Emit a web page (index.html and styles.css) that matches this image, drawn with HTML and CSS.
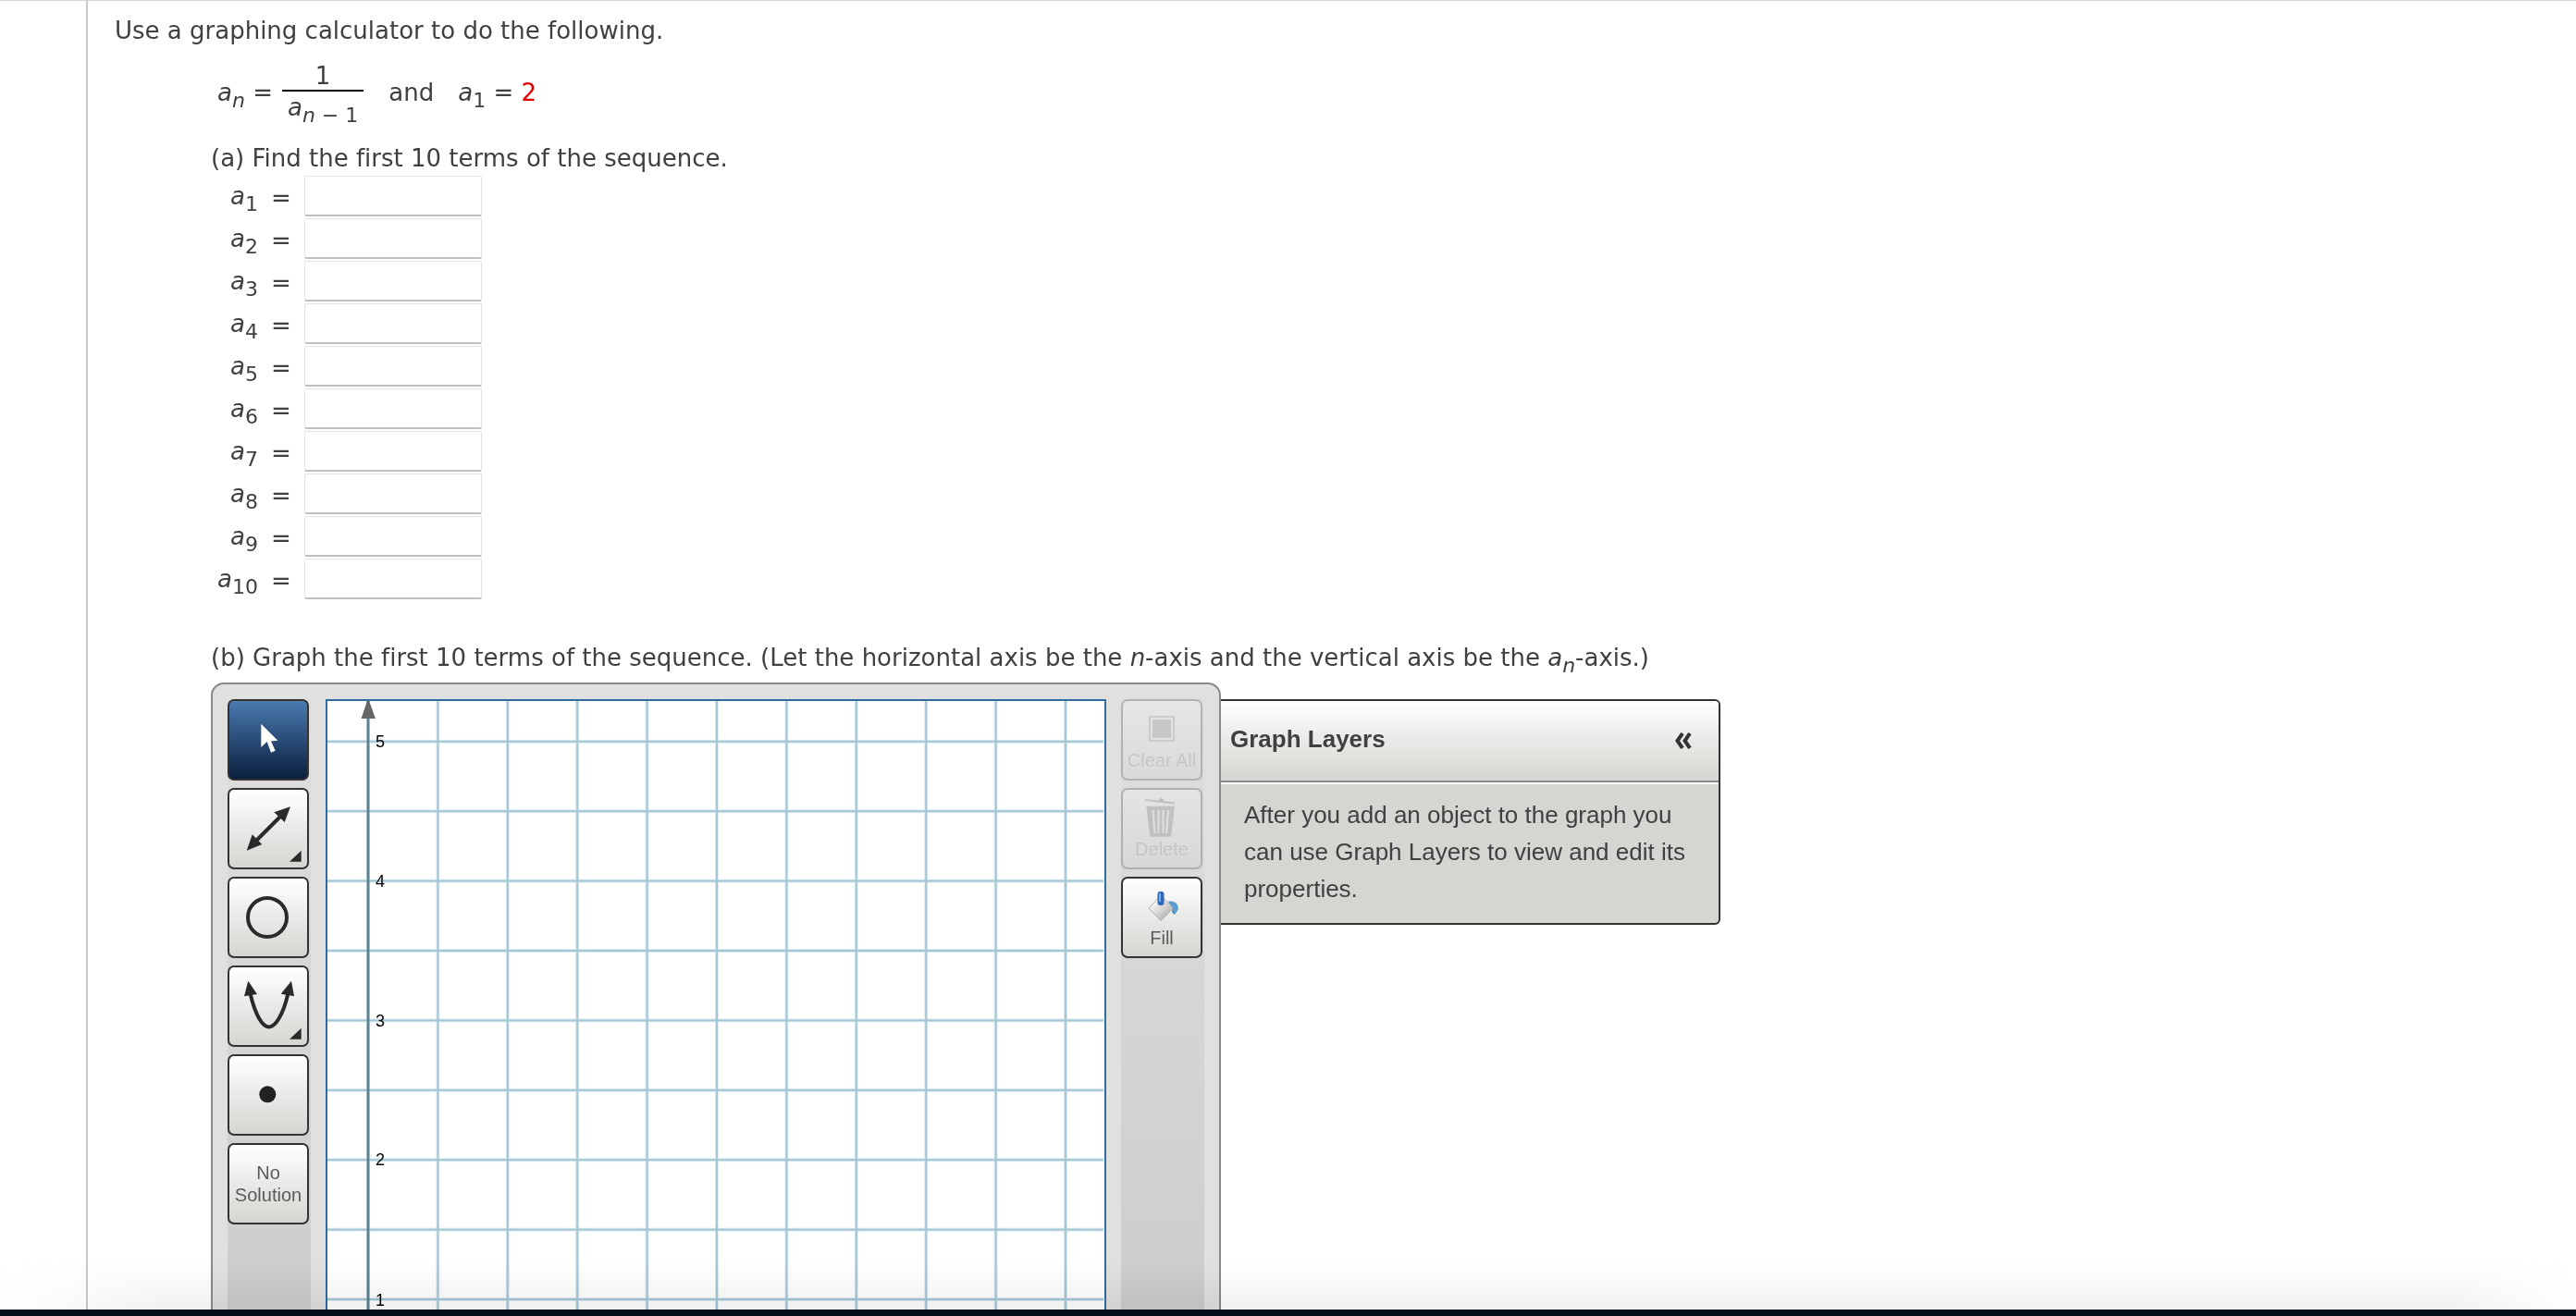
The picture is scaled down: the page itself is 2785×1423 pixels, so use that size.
FILE: index.html
```html
<!DOCTYPE html>
<html lang="en">
<head>
<meta charset="utf-8">
<title>Sequence graphing question</title>
<link rel="stylesheet" href="styles.css">
</head>
<body>
<main class="page">
  <section class="question">
    <p class="line">Use a graphing calculator to do the following.</p>
    <div class="work">
      <div class="formula">
        <span><i>a</i><sub><i>n</i></sub> =</span>
        <span class="fraction">
          <span class="numerator">1</span>
          <span class="denominator"><i>a</i><sub><i>n</i> − 1</sub></span>
        </span>
        <span class="and">and</span>
        <span><i>a</i><sub>1</sub> = <span class="given">2</span></span>
      </div>
      <p class="line">(a) Find the first 10 terms of the sequence.</p>
      <div class="terms">
        <div class="term"><label for="t1"><i>a</i><sub>1</sub></label><span>=</span><input id="t1" type="text"></div>
        <div class="term"><label for="t2"><i>a</i><sub>2</sub></label><span>=</span><input id="t2" type="text"></div>
        <div class="term"><label for="t3"><i>a</i><sub>3</sub></label><span>=</span><input id="t3" type="text"></div>
        <div class="term"><label for="t4"><i>a</i><sub>4</sub></label><span>=</span><input id="t4" type="text"></div>
        <div class="term"><label for="t5"><i>a</i><sub>5</sub></label><span>=</span><input id="t5" type="text"></div>
        <div class="term"><label for="t6"><i>a</i><sub>6</sub></label><span>=</span><input id="t6" type="text"></div>
        <div class="term"><label for="t7"><i>a</i><sub>7</sub></label><span>=</span><input id="t7" type="text"></div>
        <div class="term"><label for="t8"><i>a</i><sub>8</sub></label><span>=</span><input id="t8" type="text"></div>
        <div class="term"><label for="t9"><i>a</i><sub>9</sub></label><span>=</span><input id="t9" type="text"></div>
        <div class="term"><label for="t10"><i>a</i><sub>10</sub></label><span>=</span><input id="t10" type="text"></div>
      </div>
      <p class="line">(b) Graph the first 10 terms of the sequence. (Let the horizontal axis be the <i>n</i>-axis and the vertical axis be the <i>a</i><sub><i>n</i></sub>-axis.)</p>
      <div class="grapher">
        <div class="tool">
          <div class="column">
            <button class="key selected" type="button" aria-label="Pointer">
              <svg viewBox="0 0 84 84"><path fill="#fff" d="M34.3 24.7V50l6.4-6L45 55.7l4.7-2L45 43.6l7.3-.8z"/></svg>
            </button>
            <button class="key" type="button" aria-label="Line">
              <svg viewBox="0 0 84 84" fill="#2a2a2a"><path d="M24 60 60 24" stroke="#2a2a2a" stroke-width="4"/><path d="M66 18.3 48.3 24.3 59.7 35zM18.7 65.7l6-17.4 10.6 10.7zM65 77.7h12.7v-12z"/></svg>
            </button>
            <button class="key" type="button" aria-label="Circle">
              <svg viewBox="0 0 84 84"><circle cx="41" cy="42" r="21" fill="none" stroke="#2a2a2a" stroke-width="4"/></svg>
            </button>
            <button class="key" type="button" aria-label="Parabola">
              <svg viewBox="0 0 84 84" fill="#2a2a2a"><path d="M22.5 28C28 52 36 64.5 42.7 64.5S58 52 63.5 28" fill="none" stroke="#2a2a2a" stroke-width="4"/><path d="M20.3 14.7 16 31.3 30 29zM67 14.7 55.7 28.7 70 31.3zM65 77.7h12.7v-12z"/></svg>
            </button>
            <button class="key" type="button" aria-label="Point">
              <svg viewBox="0 0 84 84"><circle cx="41.3" cy="41.3" r="9" fill="#222"/></svg>
            </button>
            <button class="key worded" type="button">No<br>Solution</button>
          </div>
          <div class="plot">
            <svg viewBox="0 0 840 840" role="img" aria-label="Coordinate grid">
              <defs>
                <pattern id="grid" x="6.3" y="6.1" width="75.4" height="75.4" patternUnits="userSpaceOnUse">
                  <path d="M0 37.7H75.4M37.7 0V75.4" stroke="#5b99b3" stroke-opacity=".2" stroke-width="4"/>
                  <path d="M0 37.7H75.4M37.7 0V75.4" stroke="#5b99b3" stroke-opacity=".45" stroke-width="2"/>
                </pattern>
              </defs>
              <rect width="839" height="840" fill="url(#grid)"/>
              <path d="M44 0V840" stroke="#3c6675" stroke-opacity=".7" stroke-width="3"/>
              <path d="M44 -3 36.5 19h15.5z" fill="#666"/>
              <g class="ticks"><text x="52" y="50">5</text><text x="52" y="201">4</text><text x="52" y="352">3</text><text x="52" y="502">2</text><text x="52" y="654">1</text></g>
            </svg>
          </div>
          <div class="column">
            <button class="key worded low" type="button" disabled>
              <svg viewBox="0 0 84 52" fill="#8a8a8a"><path d="M29 17h26v26H29z" fill="none" stroke="#999" stroke-width="2"/><path d="M32 20h20v20H32z"/></svg>
              <span>Clear All</span>
            </button>
            <button class="key worded low" type="button" disabled>
              <svg viewBox="0 0 84 52" fill="#777"><path d="M24.3 10 38 11.5 41 9l3 1v2l12 1.5v2L24.3 12zM25.3 17.7H56l-4 33H29.3z"/><path d="M32.5 22l2 25M38.5 22v25M43.5 22v25M49 22l-2 25" stroke="#eee" stroke-width="2"/></svg>
              <span>Delete</span>
            </button>
            <button class="key worded low" type="button">
              <svg viewBox="0 0 84 52">
                <defs><linearGradient id="steel" x1="0" y1="0" x2="1" y2="1"><stop offset=".2" stop-color="#fafafa"/><stop offset="1" stop-color="#a0a0a0"/></linearGradient></defs>
                <path d="M49 25c7-2 12 3 10.500 9l-3.500 5-3-2v-6z" fill="#5a9bd0"/>
                <path d="M41 18.5 54.5 32 41 45.5 28 32z" fill="url(#steel)" stroke="#aaa"/>
                <rect x="37.5" y="14" width="7" height="15" rx="3" fill="#2d68b8"/><path d="M40 16v9" stroke="#78aee6" stroke-width="2"/>
              </svg>
              <span>Fill</span>
            </button>
          </div>
        </div>
        <aside class="layers">
          <header class="layers-head">
            <h2>Graph Layers</h2>
            <button class="collapse" type="button" aria-label="Collapse"><svg viewBox="0 0 20 18"><path d="M9 1 3.5 9 9 17M17 1l-5.5 8 5.5 8" fill="none" stroke="#333" stroke-width="4"/></svg></button>
          </header>
          <p>After you add an object to the graph you can use Graph Layers to view and edit its properties.</p>
        </aside>
      </div>
    </div>
  </section>
</main>
<footer class="dock"></footer>
</body>
</html>
```

FILE: styles.css
```css
* { box-sizing: border-box; }

body {
  margin: 0;
  height: 100vh;
  display: flex;
  flex-direction: column;
  background: #fff;
  color: #404040;
  font: 26px/32px "DejaVu Sans", sans-serif;
  font-variant-ligatures: none;
}

p, h2 { margin: 0; }

sub {
  font-size: 22px;
  line-height: 0;
  vertical-align: -7px;
}

.page {
  position: relative;
  flex: 1;
  min-height: 0;
  overflow: hidden;
  border-top: 1px solid #d8d8d8;
}

/* soft shade above the dock, fading out at both ends */
.page::after {
  content: "";
  position: absolute;
  inset: auto 0 0 0;
  height: 52px;
  background:
    linear-gradient(90deg, #fff, transparent 200px),
    linear-gradient(270deg, #fff, transparent 150px),
    linear-gradient(transparent, rgba(0, 0, 0, .06));
  mix-blend-mode: multiply;
  pointer-events: none;
}

.dock {
  height: 7px;
  background: #040c18;
}

.question {
  min-height: 100%;
  margin-left: 93px;
  padding: 16px 0 0 29px;
  border-left: 2px solid #c8c8c8;
}

.work {
  margin-left: 104px;
}

.formula {
  display: flex;
  align-items: center;
  padding: 18px 0 22px 7px;
}

.fraction {
  display: flex;
  flex-direction: column;
  margin: 0 27px 0 10px;
  text-align: center;
}

.numerator { line-height: 30px; }

.denominator {
  padding: 0 6px;
  border-top: 2px solid #000;
  line-height: 34px;
}

.and { margin-right: 26px; }

.given { color: #e00000; }

.terms {
  display: flex;
  flex-direction: column;
  gap: 2px;
  padding: 3px 0 47px;
}

.term {
  display: flex;
  align-items: center;
}

.term label {
  width: 51px;
  text-align: right;
}

.term span {
  margin: 0 14px;
  padding-top: 4px;
}

.term input {
  width: 192px;
  height: 44px;
  padding: 0 8px;
  border: 1px solid #e4e4e4;
  border-bottom: 2px solid #c0c0c0;
  border-radius: 2px;
  background: #fff;
  font: inherit;
}

.grapher {
  display: flex;
  align-items: flex-start;
  padding-top: 11px;
  font-family: "Liberation Sans", sans-serif;
}

.tool {
  display: flex;
  gap: 16px;
  padding: 16px;
  border: 2px solid #8a8a8a;
  border-radius: 14px;
  background: #e0e0de;
}

.column {
  display: flex;
  flex-direction: column;
  gap: 8px;
  width: 90px;
  background: linear-gradient(#dedede, #c8c8c8);
}

.key {
  display: block;
  width: 88px;
  height: 88px;
  padding: 0;
  border: 2px solid #333;
  border-radius: 7px;
  background: linear-gradient(#fff, #d4d6d1);
  color: #5a5a5a;
  font: 20px/24px "Liberation Sans", sans-serif;
  text-align: center;
  white-space: nowrap;
}

.key svg { display: block; width: 84px; }

.key.selected { background: linear-gradient(#4a7ab0, #0a1f3e); }

.key.low { display: flex; flex-direction: column; }

.key.low span { width: 100%; }

.key:disabled { opacity: .25; color: #888; }

.plot {
  width: 844px;
  border: 2px solid #2f6ca3;
  background: #fff;
}

.plot svg { display: block; width: 100%; }

.ticks { font-size: 18px; fill: #000; }

.layers {
  width: 540px;
  margin-top: 18px;
  border: 2px solid #333;
  border-left: 0;
  border-radius: 0 6px 6px 0;
  background: #d4d6d1;
}

.layers-head {
  display: flex;
  align-items: center;
  justify-content: space-between;
  height: 88px;
  padding: 0 28px 4px 10px;
  border-bottom: 2px solid #8a8a8a;
  border-radius: 0 4px 0 0;
  background: linear-gradient(#fff, #d4d6d1);
}

.layers h2 { font-size: 26px; }

.collapse {
  padding: 4px 0 0;
  border: 0;
  background: none;
}

.collapse svg { display: block; width: 20px; }

.layers p {
  padding: 13px 28px 17px 25px;
  border-top: 2px solid #fff;
  line-height: 40px;
}
```
